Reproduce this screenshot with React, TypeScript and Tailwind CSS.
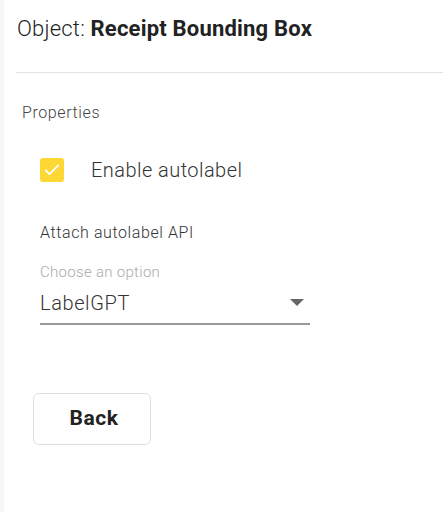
import React, { useState } from "react";

export default function App() {
  const [enabled, setEnabled] = useState(true);

  return (
    <div className="flex min-h-[512px] w-[443px] bg-white font-['Roboto',sans-serif]">
      <div className="w-[4px] shrink-0 bg-[#f7f7f7]" />
      <div className="flex-1 flex flex-col">
        <div className="h-[72px] pl-[13px] pt-[15px]">
          <h1 className="text-[22px] leading-[28px] tracking-[0.2px] text-[#222]">
            <span className="font-light">Object: </span>
            <span className="font-bold">Receipt Bounding Box</span>
          </h1>
        </div>
        <div className="ml-[12px] h-px bg-[#e2e2e2]" />

        <div className="pl-[18px] pt-[30px]">
          <p className="text-[16px] leading-[20px] tracking-[0.6px] font-light text-[#444]">Properties</p>
        </div>

        <div className="pl-[36px] pt-[35px] flex items-center">
          <button
            onClick={() => setEnabled(!enabled)}
            className={`size-[24px] rounded-[3px] flex items-center justify-center ${enabled ? "bg-[#fdd835]" : "border-2 border-[#999] bg-white"}`}
          >
            {enabled && (
              <svg width="20" height="20" viewBox="0 0 24 24" fill="none" stroke="white" strokeWidth="2.2" strokeLinecap="round" strokeLinejoin="round">
                <path d="M4.5 12.5l4.5 4.5L19.5 6.5" />
              </svg>
            )}
          </button>
          <span className="ml-[27px] text-[20px] leading-[24px] tracking-[0.45px] font-light text-[#333]">Enable autolabel</span>
        </div>

        <div className="pl-[36px] pt-[41px] w-[306px]">
          <p className="text-[16px] leading-[20px] tracking-[0.6px] font-light text-[#333]">Attach autolabel API</p>
          <p className="mt-[20px] text-[15px] leading-[18px] tracking-[0.3px] font-light text-[#aaa]">Choose an option</p>
          <div className="mt-[9px] flex items-center justify-between border-b-2 border-[#999] pb-[7px]">
            <span className="text-[20px] leading-[26px] tracking-[0.6px] font-light text-[#333]">LabelGPT</span>
            <svg width="14" height="8" viewBox="0 0 14 8" className="mr-[6px]">
              <path d="M0 0h14L7 7z" fill="#666" />
            </svg>
          </div>
        </div>

        <div className="pl-[29px] pt-[68px]">
          <button className="w-[118px] h-[52px] pl-[4px] rounded-[6px] border border-[#e0e0e0] bg-white text-[21px] tracking-[0.5px] font-bold text-[#222]">
            Back
          </button>
        </div>
      </div>
    </div>
  );
}
